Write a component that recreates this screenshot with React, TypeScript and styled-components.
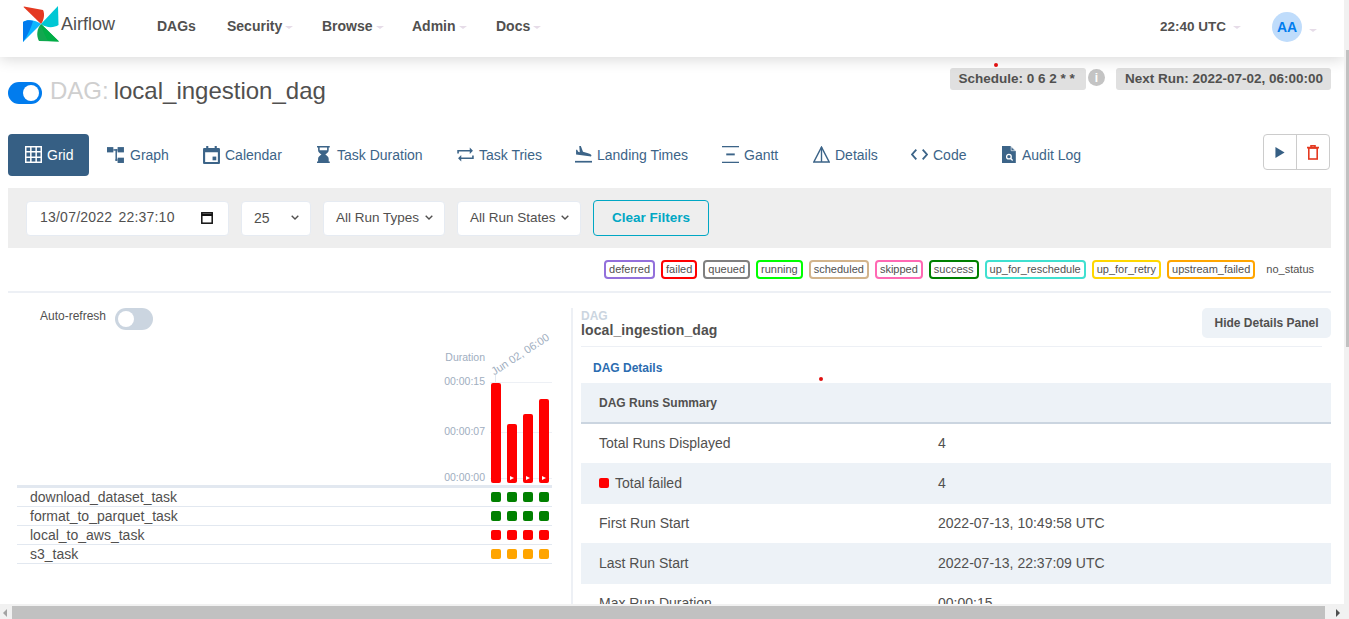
import React from 'react';
import styled, { createGlobalStyle } from 'styled-components';

const GlobalStyle = createGlobalStyle`
  html, body {
    margin: 0;
    padding: 0;
    height: 100%;
    overflow: hidden;
    background: #fff;
    font-family: "Liberation Sans", Arial, sans-serif;
    color: #51504f;
  }
  * { box-sizing: border-box; }
`;

const Page = styled.div`
  width: 1344px;
  height: 605px;
  overflow: hidden;
  position: relative;
`;

const Navbar = styled.nav`
  height: 57px;
  display: flex;
  align-items: center;
  background: #fff;
  box-shadow: 0 2px 14px rgba(0, 0, 0, 0.16);
  padding: 0 27px 0 23px;
  position: relative;
  z-index: 2;
`;

const Brand = styled.div`
  display: flex;
  align-items: center;
  gap: 2px;
  width: 134px;
  margin-top: -9px;
  font-size: 18px;
  color: #51504f;
`;

const NavItem = styled.div<{ $w: number; $small?: boolean }>`
  width: ${(p) => p.$w}px;
  display: flex;
  align-items: center;
  font-size: ${(p) => (p.$small ? 13.5 : 14)}px;
  font-weight: 700;
  color: #51504f;
  margin-top: -5px;
`;

const Caret = styled.span<{ $gap?: number }>`
  display: inline-block;
  width: 0;
  height: 0;
  margin-left: ${(p) => p.$gap ?? 3}px;
  margin-top: 3px;
  border-top: 3.5px solid #e6dce8;
  border-left: 4px solid transparent;
  border-right: 4px solid transparent;
`;

const NavSpacer = styled.div`
  flex: 1;
`;

const Avatar = styled.div`
  width: 30px;
  height: 30px;
  border-radius: 50%;
  background: #bfdcfb;
  color: #017cee;
  font-size: 14px;
  font-weight: 700;
  display: flex;
  align-items: center;
  justify-content: center;
  margin-top: -3px;
`;

const Content = styled.main`
  padding: 0 13px 0 8px;
`;

const HeaderRow = styled.div`
  height: 77px;
  display: flex;
  justify-content: space-between;
`;

const Title = styled.h4`
  margin: 20px 0 0;
  display: flex;
  align-items: center;
  height: 28px;
  font-size: 24px;
  font-weight: 400;
  color: #51504f;
`;

const Muted = styled.span`
  color: #cfcfcf;
  margin-right: 5px;
`;

const Toggle = styled.span<{ $on?: boolean; $w: number; $h: number }>`
  display: inline-block;
  position: relative;
  width: ${(p) => p.$w}px;
  height: ${(p) => p.$h}px;
  border-radius: ${(p) => p.$h}px;
  background: ${(p) => (p.$on ? '#017cee' : '#cbd5e0')};
  flex: none;
  &::after {
    content: '';
    position: absolute;
    top: 3px;
    ${(p) => (p.$on ? 'right: 3px;' : 'left: 3px;')}
    width: ${(p) => p.$h - 6}px;
    height: ${(p) => p.$h - 6}px;
    border-radius: 50%;
    background: #fff;
  }
`;

const TitleToggle = styled(Toggle)`
  margin: 4px 8px 0 0;
`;

const HeaderLabels = styled.div`
  display: flex;
  align-items: flex-start;
  padding-top: 11px;
`;

const Label = styled.span<{ $right: number }>`
  height: 22px;
  display: flex;
  align-items: center;
  padding: 0 ${(p) => p.$right}px 2px 9px;
  background: #e0e0e0;
  border-radius: 3px;
  font-size: 13.5px;
  font-weight: 700;
  color: #51504f;
`;

const InfoDot = styled.span`
  width: 17px;
  height: 17px;
  margin: 1px 11px 0 2px;
  border-radius: 50%;
  background: #c4c4c4;
  color: #fff;
  font-size: 12px;
  font-weight: 700;
  display: flex;
  align-items: center;
  justify-content: center;
`;

const TabRow = styled.div`
  height: 42px;
  display: flex;
  align-items: flex-start;
  margin-bottom: 12px;
`;

const Tab = styled.div<{ $active?: boolean; $w: number }>`
  width: ${(p) => p.$w}px;
  height: 42px;
  flex: none;
  display: flex;
  align-items: center;
  gap: 5px;
  padding: 0 0 1px ${(p) => (p.$active ? 17 : 18)}px;
  font-size: 14px;
  color: ${(p) => (p.$active ? '#fff' : '#3c6488')};
  background: ${(p) => (p.$active ? '#365f84' : 'transparent')};
  border-radius: 4px;
  svg { flex: none; }
`;

const ActionGroup = styled.div`
  margin-left: auto;
  margin-right: 1px;
  display: flex;
  width: 67px;
  height: 36px;
  border: 1px solid #ccc;
  border-radius: 4px;
`;

const ActionButton = styled.div<{ $divider?: boolean }>`
  flex: 1;
  display: flex;
  align-items: center;
  justify-content: center;
  border-left: ${(p) => (p.$divider ? '1px solid #ccc' : 'none')};
`;

const FilterBar = styled.div`
  height: 60px;
  background: #eeeeee;
  display: flex;
  align-items: center;
  gap: 12px;
  padding: 0 18px;
`;

const Field = styled.div<{ $w: number }>`
  width: ${(p) => p.$w}px;
  height: 35px;
  background: #fff;
  border: 1px solid #e6ebf2;
  border-radius: 4px;
  display: flex;
  align-items: center;
  justify-content: space-between;
  padding: 0 11px 1px 12px;
  font-size: 13.5px;
  color: #51504f;
`;

const DateField = styled(Field)`
  padding: 0 15px 1px 13px;
  font-size: 14px;
`;

const CountField = styled(Field)`
  font-size: 14px;
`;

const DateText = styled.span`
  margin-top: -2px;
  letter-spacing: 0.22px;
  word-spacing: 2px;
`;

const ClearButton = styled.div`
  width: 116px;
  height: 36px;
  border: 1px solid #00a7c4;
  border-radius: 4px;
  background: transparent;
  color: #00a7c4;
  display: flex;
  align-items: center;
  justify-content: center;
  font-size: 13.5px;
  font-weight: 700;
  padding-bottom: 1px;
`;

const LegendRow = styled.div`
  height: 45px;
  display: flex;
  justify-content: flex-end;
  align-items: center;
  gap: 6px;
  padding: 0 0 1px;
  border-bottom: 2px solid #edf0f5;
`;

const StateTag = styled.span<{ $color: string }>`
  height: 19px;
  padding: 0 3px;
  display: flex;
  align-items: center;
  border: 2px solid ${(p) => p.$color};
  border-radius: 4px;
  font-size: 11px;
  color: #51504f;
`;

const NoStatus = styled.span`
  font-size: 11px;
  color: #51504f;
  padding: 0 17px 0 5px;
`;

const Split = styled.div`
  display: flex;
`;

const GridPane = styled.section`
  width: 565px;
  height: 320px;
  flex: none;
  margin-top: 15px;
  padding-left: 9px;
  border-right: 2px solid #edf0f5;
`;

const RefreshRow = styled.div`
  display: flex;
  align-items: flex-start;
  gap: 9px;
  padding-left: 23px;
  height: 43px;
  font-size: 12px;
  line-height: 14px;
  color: #51504f;
`;

const RefreshLabel = styled.span`
  padding-top: 1px;
`;

const ChartArea = styled.div`
  width: 535px;
  height: 137px;
  position: relative;
  border-bottom: 3px solid #e2e8f0;
`;

const ChartLabel = styled.span<{ $y: number }>`
  position: absolute;
  right: 67px;
  top: ${(p) => p.$y}px;
  font-size: 10.5px;
  line-height: 12px;
  color: #a0aec0;
`;

const DateTick = styled.span`
  position: absolute;
  left: 470px;
  top: -3px;
  font-size: 11px;
  line-height: 13px;
  color: #a0aec0;
  transform: rotate(-33deg);
  white-space: nowrap;
`;

const TickMark = styled.div`
  position: absolute;
  left: 478px;
  top: 24px;
  width: 1px;
  height: 7px;
  background: #e2e8f0;
`;

const GridLine = styled.div<{ $y: number }>`
  position: absolute;
  left: 473px;
  right: 0;
  top: ${(p) => p.$y}px;
  height: 1px;
  background: #edf0f5;
`;

const Bars = styled.div`
  position: absolute;
  left: 474px;
  bottom: 2px;
  display: flex;
  align-items: flex-end;
  gap: 6px;
`;

const Bar = styled.div<{ $h: number }>`
  width: 10px;
  height: ${(p) => p.$h}px;
  background: #ff0000;
  border-radius: 2px;
  display: flex;
  justify-content: center;
  align-items: flex-end;
  padding-bottom: 3px;
`;

const PlayMark = styled.span`
  width: 0;
  height: 0;
  border-left: 4px solid #fff;
  border-top: 2.5px solid transparent;
  border-bottom: 2.5px solid transparent;
`;

const TaskRow = styled.div`
  width: 535px;
  height: 19px;
  display: flex;
  justify-content: space-between;
  align-items: center;
  border-bottom: 1px solid #e2e8f0;
  padding: 0 3px 0 13px;
  font-size: 14px;
  color: #51504f;
`;

const Squares = styled.div`
  display: flex;
  gap: 6px;
`;

const Square = styled.span<{ $color: string }>`
  width: 10px;
  height: 10px;
  border-radius: 2px;
  background: ${(p) => p.$color};
`;

const DetailsPane = styled.section`
  flex: 1;
  padding-left: 8px;
  min-width: 0;
`;

const DetailsHeader = styled.div`
  height: 38px;
  margin-top: 15px;
  display: flex;
  justify-content: space-between;
  align-items: flex-start;
`;

const CrumbBlock = styled.div`
  padding-top: 2px;
`;

const Crumb = styled.div`
  font-size: 12px;
  line-height: 12px;
  color: #cbd5e0;
  font-weight: 700;
`;

const CrumbName = styled.div`
  font-size: 14px;
  line-height: 16px;
  letter-spacing: 0.1px;
  font-weight: 700;
  color: #51504f;
`;

const HidePanel = styled.div`
  width: 129px;
  height: 30px;
  background: #edf2f7;
  border-radius: 5px;
  display: flex;
  align-items: center;
  justify-content: center;
  font-size: 12px;
  font-weight: 700;
  color: #51504f;
`;

const DetailsRule = styled.div`
  height: 1px;
  background: #edf0f5;
  margin-right: 9px;
`;

const DetailsHeading = styled.div`
  height: 36px;
  padding: 14px 0 0 12px;
  font-size: 12px;
  font-weight: 700;
  color: #2b6cb0;
`;

const SummaryHead = styled.div`
  height: 41px;
  background: #edf2f7;
  border-bottom: 2px solid #cbd5e0;
  display: flex;
  align-items: center;
  padding-left: 18px;
  font-size: 12px;
  font-weight: 700;
  color: #51504f;
`;

const SummaryRow = styled.div<{ $shaded?: boolean }>`
  height: ${(p) => (p.$shaded ? 41 : 39)}px;
  display: flex;
  align-items: center;
  padding: 0 0 2px 18px;
  background: ${(p) => (p.$shaded ? '#edf2f7' : '#fff')};
  font-size: 14px;
  color: #51504f;
`;

const SummaryKey = styled.div`
  width: 339px;
  display: flex;
  align-items: center;
  gap: 6px;
`;

const RedDot = styled.span`
  width: 10px;
  height: 10px;
  border-radius: 2px;
  background: #ff0000;
`;

const Speck = styled.span<{ $x: number; $y: number }>`
  position: absolute;
  left: ${(p) => p.$x}px;
  top: ${(p) => p.$y}px;
  width: 4px;
  height: 4px;
  border-radius: 50%;
  background: #e01010;
  z-index: 3;
`;

const VerticalTrack = styled.div`
  position: fixed;
  top: 0;
  right: 0;
  width: 5px;
  height: 605px;
  background: #f1f1f1;
`;

const VerticalThumb = styled.div`
  position: absolute;
  top: 50px;
  left: 2px;
  right: 0;
  height: 297px;
  background: #c1c1c1;
`;

const HorizontalTrack = styled.div`
  position: fixed;
  left: 0;
  bottom: 0;
  width: 100%;
  height: 15px;
  background: #f1f1f1;
  display: flex;
  align-items: center;
  justify-content: space-between;
  padding: 2px 9px 0 3px;
`;

const HorizontalThumb = styled.div`
  position: absolute;
  left: 12px;
  top: 2px;
  bottom: 0;
  width: 1313px;
  background: #c1c1c1;
`;

const Arrow = styled.span<{ $dir: 'left' | 'right' }>`
  width: 0;
  height: 0;
  border-top: 4px solid transparent;
  border-bottom: 4px solid transparent;
  ${(p) => (p.$dir === 'left' ? 'border-right: 4px solid #a3a3a3;' : 'border-left: 4px solid #505050;')}
`;

const Logo = () => (
  <svg width="36" height="36" viewBox="0 0 36 36">
    <path d="M18 18 L0.5 1 L1 0.5 L20 4 C22 8 21 14 18 18Z" fill="#e43921" />
    <path d="M18 18 L35 0 L35.5 19 C31 22 23 22 18 18Z" fill="#00c7d4" />
    <path d="M18 18 L36 35.5 L16 35 C13 30 14 22 18 18Z" fill="#11a84f" />
    <path d="M18 18 L0 36 L0 16 C5 13 13 14 18 18Z" fill="#0cb6ff" />
    <path d="M18 18 L0 36 L0 16 C3 14 7 14 10 15 C8 22 5 29 0 36Z" fill="#017cee" />
    <path d="M18 18 L36 35.5 L25 35 C22 29 19 24 18 18Z" fill="#00ad46" />
  </svg>
);

const GridIcon = () => (
  <svg width="17" height="17" viewBox="0 0 16 16" fill="none" stroke="#fff" strokeWidth="1.4">
    <rect x="0.7" y="0.7" width="14.6" height="14.6" />
    <path d="M5.5 1v14M10.5 1v14M1 5.5h14M1 10.5h14" />
  </svg>
);

const GraphIcon = () => (
  <svg width="18" height="17" viewBox="0 0 17 16" fill="#3c6488">
    <rect x="0" y="1" width="6" height="5" />
    <rect x="10" y="1" width="6" height="5" />
    <rect x="10" y="11" width="6" height="5" />
    <rect x="6" y="3" width="4" height="1.4" />
    <rect x="8" y="3" width="1.4" height="11" />
    <rect x="8" y="12.5" width="2" height="1.4" />
  </svg>
);

const CalendarIcon = () => (
  <svg width="17" height="18" viewBox="0 0 16 17" fill="#3c6488">
    <path d="M3 0h2v2h6V0h2v2h2a1 1 0 0 1 1 1v13a1 1 0 0 1-1 1H1a1 1 0 0 1-1-1V3a1 1 0 0 1 1-1h2zM2 6v9h12V6z" />
    <rect x="9" y="10" width="3.5" height="3.5" />
  </svg>
);

const HourglassIcon = () => (
  <svg width="15" height="17" viewBox="0 0 14.1 16" fill="#3c6488">
    <path d="M0 0h12v1.5h-1V4c0 2-2 3-3.2 4C9 9 11 10 11 12v2.5h1V16H0v-1.5h1V12c0-2 2-3 3.2-4C3 7 1 6 1 4V1.5H0zM2.5 1.5V4h7V1.5z" />
  </svg>
);

const RetweetIcon = () => (
  <svg width="17" height="17" viewBox="0 0 16 16" fill="none" stroke="#3c6488" strokeWidth="1.5">
    <path d="M1 7V4.5h13" />
    <path d="M15 9v2.5H2" />
    <path d="M12 1.5l3 3-3 3z" fill="#3c6488" stroke="none" />
    <path d="M4 8.5l-3 3 3 3z" fill="#3c6488" stroke="none" />
  </svg>
);

const LandingIcon = () => (
  <svg width="17" height="17" viewBox="0 0 16 16" fill="#3c6488">
    <path d="M4 0h1.5l2 5.5 4 1c2 .5 4 1.4 4 2.6 0 .6-1 .8-2 .6L1 8V3.5h1l1 2 1.5.4z" />
    <rect x="0" y="14" width="16" height="1.6" />
  </svg>
);

const GanttIcon = () => (
  <svg width="17" height="17" viewBox="0 0 16 16" fill="#3c6488">
    <rect x="0" y="0" width="16" height="1.2" />
    <rect x="4" y="7" width="8" height="1.8" />
    <rect x="0" y="14.8" width="16" height="1.2" />
  </svg>
);

const DetailsIcon = () => (
  <svg width="17" height="17" viewBox="0 0 16 16" fill="none" stroke="#3c6488" strokeWidth="1.3">
    <path d="M8 1L0.8 15h14.4z" />
    <path d="M8 1v14" />
  </svg>
);

const CodeIcon = () => (
  <svg width="17" height="13" viewBox="0 0 16 12" fill="none" stroke="#3c6488" strokeWidth="1.7">
    <path d="M5 1.5L1 6l4 4.5M11 1.5L15 6l-4 4.5" />
  </svg>
);

const AuditIcon = () => (
  <svg width="15" height="17" viewBox="0 0 14.1 16">
    <path d="M0 0h8l5 5v11H0z" fill="#3c6488" />
    <path d="M8.6 0.6L12.4 4.4H8.6z" fill="#3c6488" stroke="#fff" strokeWidth="0.6" />
    <circle cx="6.5" cy="10" r="2.2" fill="none" stroke="#fff" strokeWidth="1.2" />
    <path d="M8 11.6l2 2" stroke="#fff" strokeWidth="1.2" />
  </svg>
);

const PlayIcon = () => (
  <svg width="10" height="11" viewBox="0 0 10 12" fill="#365f84">
    <path d="M0 0l10 6-10 6z" />
  </svg>
);

const TrashIcon = () => (
  <svg width="12" height="15" viewBox="0 0 12 15" fill="none" stroke="#e43921" strokeWidth="1.6">
    <path d="M0 2.6h12M4 2.4V0.8h4v1.6" />
    <rect x="1.8" y="3" width="8.4" height="11" />
  </svg>
);

const SelectChevron = () => (
  <svg width="8" height="5" viewBox="0 0 8 5" fill="none" stroke="#51504f" strokeWidth="1.4">
    <path d="M0.7 0.7L4 4l3.3-3.3" />
  </svg>
);

const DatePickerIcon = () => (
  <svg width="12" height="13" viewBox="0 0 12 13" fill="none" stroke="#111" strokeWidth="1.5">
    <rect x="0.8" y="1.8" width="10.4" height="10.4" />
    <path d="M0.8 3.8h10.4" strokeWidth="2.4" />
  </svg>
);

const tabs = [
  { label: 'Grid', w: 81, icon: <GridIcon />, active: true },
  { label: 'Graph', w: 96, icon: <GraphIcon /> },
  { label: 'Calendar', w: 114, icon: <CalendarIcon /> },
  { label: 'Task Duration', w: 140, icon: <HourglassIcon /> },
  { label: 'Task Tries', w: 118, icon: <RetweetIcon /> },
  { label: 'Landing Times', w: 147, icon: <LandingIcon /> },
  { label: 'Gantt', w: 91, icon: <GanttIcon /> },
  { label: 'Details', w: 98, icon: <DetailsIcon /> },
  { label: 'Code', w: 91, icon: <CodeIcon /> },
  { label: 'Audit Log', w: 110, icon: <AuditIcon /> },
];

const states = [
  ['deferred', 'mediumpurple'],
  ['failed', 'red'],
  ['queued', 'gray'],
  ['running', 'lime'],
  ['scheduled', 'tan'],
  ['skipped', 'hotpink'],
  ['success', 'green'],
  ['up_for_reschedule', 'turquoise'],
  ['up_for_retry', 'gold'],
  ['upstream_failed', 'orange'],
];

const tasks = [
  ['download_dataset_task', 'green'],
  ['format_to_parquet_task', 'green'],
  ['local_to_aws_task', 'red'],
  ['s3_task', 'orange'],
];

const summary = [
  ['Total Runs Displayed', '4'],
  ['Total failed', '4'],
  ['First Run Start', '2022-07-13, 10:49:58 UTC'],
  ['Last Run Start', '2022-07-13, 22:37:09 UTC'],
  ['Max Run Duration', '00:00:15'],
];

export default function App() {
  return (
    <>
      <GlobalStyle />
      <Page>
        <Navbar>
          <Brand>
            <Logo />
            Airflow
          </Brand>
          <NavItem $w={70}>DAGs</NavItem>
          <NavItem $w={95}>Security<Caret /></NavItem>
          <NavItem $w={90}>Browse<Caret /></NavItem>
          <NavItem $w={84}>Admin<Caret /></NavItem>
          <NavItem $w={60}>Docs<Caret /></NavItem>
          <NavSpacer />
          <NavItem $w={112} $small>22:40 UTC<Caret $gap={7} /></NavItem>
          <Avatar>AA</Avatar>
          <Caret $gap={7} />
        </Navbar>
        <Speck $x={994} $y={63} />
        <Speck $x={819} $y={377} />
        <Content>
          <HeaderRow>
            <Title>
              <TitleToggle $on $w={34} $h={22} />
              <Muted>DAG:</Muted>
              local_ingestion_dag
            </Title>
            <HeaderLabels>
              <Label $right={11}>Schedule: 0 6 2 * *</Label>
              <InfoDot>i</InfoDot>
              <Label $right={8}>Next Run: 2022-07-02, 06:00:00</Label>
            </HeaderLabels>
          </HeaderRow>
          <TabRow>
            {tabs.map((t) => (
              <Tab key={t.label} $w={t.w} $active={t.active}>
                {t.icon}
                {t.label}
              </Tab>
            ))}
            <ActionGroup>
              <ActionButton><PlayIcon /></ActionButton>
              <ActionButton $divider><TrashIcon /></ActionButton>
            </ActionGroup>
          </TabRow>
          <FilterBar>
            <DateField $w={203}>
              <DateText>13/07/2022 22:37:10</DateText>
              <DatePickerIcon />
            </DateField>
            <CountField $w={70}>25<SelectChevron /></CountField>
            <Field $w={122}>All Run Types<SelectChevron /></Field>
            <Field $w={124}>All Run States<SelectChevron /></Field>
            <ClearButton>Clear Filters</ClearButton>
          </FilterBar>
          <LegendRow>
            {states.map(([name, color]) => (
              <StateTag key={name} $color={color}>{name}</StateTag>
            ))}
            <NoStatus>no_status</NoStatus>
          </LegendRow>
          <Split>
            <GridPane>
              <RefreshRow>
                <RefreshLabel>Auto-refresh</RefreshLabel>
                <Toggle $w={38} $h={22} />
              </RefreshRow>
              <ChartArea>
                <ChartLabel $y={0}>Duration</ChartLabel>
                <DateTick>Jun 02, 06:00</DateTick>
                <TickMark />
                <GridLine $y={31} />
                <GridLine $y={81} />
                <GridLine $y={127} />
                <ChartLabel $y={24}>00:00:15</ChartLabel>
                <ChartLabel $y={74}>00:00:07</ChartLabel>
                <ChartLabel $y={120}>00:00:00</ChartLabel>
                <Bars>
                  <Bar $h={100} />
                  <Bar $h={59}><PlayMark /></Bar>
                  <Bar $h={69}><PlayMark /></Bar>
                  <Bar $h={84}><PlayMark /></Bar>
                </Bars>
              </ChartArea>
              {tasks.map(([name, color]) => (
                <TaskRow key={name}>
                  {name}
                  <Squares>
                    {[0, 1, 2, 3].map((i) => <Square key={i} $color={color} />)}
                  </Squares>
                </TaskRow>
              ))}
            </GridPane>
            <DetailsPane>
              <DetailsHeader>
                <CrumbBlock>
                  <Crumb>DAG</Crumb>
                  <CrumbName>local_ingestion_dag</CrumbName>
                </CrumbBlock>
                <HidePanel>Hide Details Panel</HidePanel>
              </DetailsHeader>
              <DetailsRule />
              <DetailsHeading>DAG Details</DetailsHeading>
              <SummaryHead>DAG Runs Summary</SummaryHead>
              {summary.map(([k, v], i) => (
                <SummaryRow key={k} $shaded={i % 2 === 1}>
                  <SummaryKey>
                    {k === 'Total failed' && <RedDot />}
                    {k}
                  </SummaryKey>
                  {v}
                </SummaryRow>
              ))}
            </DetailsPane>
          </Split>
        </Content>
      </Page>
      <VerticalTrack><VerticalThumb /></VerticalTrack>
      <HorizontalTrack>
        <Arrow $dir="left" />
        <HorizontalThumb />
        <Arrow $dir="right" />
      </HorizontalTrack>
    </>
  );
}
